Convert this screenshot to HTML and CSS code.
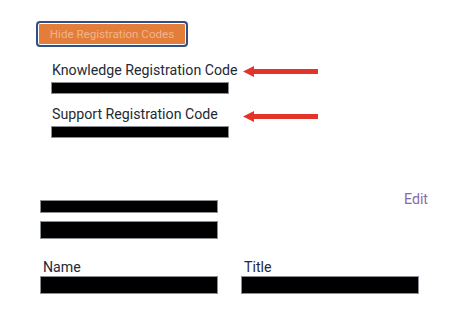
FILE: index.html
```html
<!DOCTYPE html>
<html>
<head>
<meta charset="utf-8">
<link rel="stylesheet" href="styles.css">
</head>
<body>
<div class="page">
  <div class="top">
    <button class="btn">Hide Registration Codes</button>
  </div>
  <div class="codes">
    <div class="code">
      <div class="label-row">
        <span class="label">Knowledge Registration Code</span>
        <svg class="arrow" width="75" height="11" viewBox="0 0 75 11"><path d="M0 5.5 L11 0 L11 3 L75 3 L75 8 L11 8 L11 11 Z" fill="#e3342b"/></svg>
      </div>
      <div class="bar code-bar"></div>
    </div>
    <div class="code">
      <div class="label-row">
        <span class="label">Support Registration Code</span>
        <svg class="arrow arrow2" width="75" height="11" viewBox="0 0 75 11"><path d="M0 5.5 L11 0 L11 3 L75 3 L75 8 L11 8 L11 11 Z" fill="#e3342b"/></svg>
      </div>
      <div class="bar code-bar"></div>
    </div>
  </div>
  <div class="profile">
    <div class="profile-head">
      <div class="head-bars">
        <div class="bar bar-a"></div>
        <div class="bar bar-b"></div>
      </div>
      <a class="edit">Edit</a>
    </div>
    <div class="fields">
      <div class="field">
        <div class="field-label">Name</div>
        <div class="bar bar-f"></div>
      </div>
      <div class="field">
        <div class="field-label">Title</div>
        <div class="bar bar-f"></div>
      </div>
    </div>
  </div>
</div>
</body>
</html>
```
FILE: styles.css
```css
html, body {
  margin: 0;
  padding: 0;
  background: #ffffff;
}
.page {
  font-family: Roboto, "Liberation Sans", sans-serif;
  color: #232a36;
  width: 474px;
  height: 322px;
  overflow: hidden;
}
.top {
  padding: 21px 0 0 36px;
}
.btn {
  display: block;
  box-sizing: border-box;
  width: 152px;
  height: 26px;
  margin: 0;
  padding: 0;
  border: 2px solid #2f4f86;
  border-radius: 4px;
  background: #e27d3a;
  box-shadow: inset 0 0 0 1px #ffffff;
  color: #f3b48a;
  font-family: Roboto, "Liberation Sans", sans-serif;
  font-size: 11.6px;
  text-align: center;
}
.codes {
  padding-left: 52px;
  margin-top: 15px;
}
.code + .code {
  margin-top: 13px;
}
.label-row {
  display: grid;
  grid-template-columns: 191px 75px;
  align-items: center;
  height: 16px;
}
.label {
  font-size: 14.2px;
  line-height: 16px;
  white-space: nowrap;
}
.arrow {
  display: block;
  margin-top: 2px;
}
.arrow2 {
  margin-top: 5px;
}
.bar {
  background: #000000;
  box-shadow: 0 0 0 1px #8a8f96;
}
.code-bar {
  width: 176px;
  height: 10px;
  margin-top: 5px;
}
.profile {
  padding-left: 41px;
  width: 387px;
  margin-top: 54px;
}
.profile-head {
  display: flex;
  justify-content: space-between;
  align-items: flex-start;
}
.head-bars {
  padding-top: 10px;
}
.bar-a {
  width: 176px;
  height: 11px;
}
.edit {
  color: #8a6aa6;
  font-size: 14.2px;
  line-height: 16px;
}
.bar-b {
  width: 176px;
  height: 16px;
  margin-top: 10px;
}
.fields {
  display: flex;
  gap: 25px;
  margin-top: 21px;
}
.field-label {
  font-size: 14.2px;
  line-height: 16px;
  padding-left: 2px;
  margin-bottom: 2px;
}
.bar-f {
  width: 176px;
  height: 16px;
}
```
